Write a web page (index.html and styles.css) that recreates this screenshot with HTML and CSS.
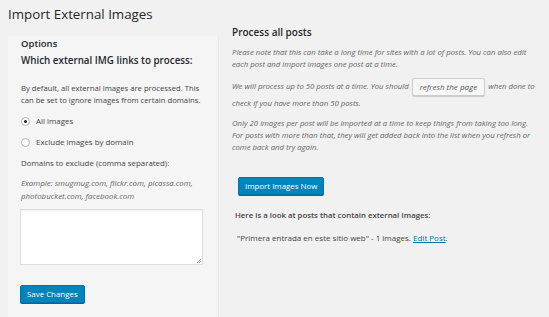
FILE: index.html
```html
<!DOCTYPE html>
<html>
<head>
<meta charset="utf-8">
<link rel="stylesheet" href="styles.css">
</head>
<body>
<div class="wrap">
  <h1 class="title">Import External Images</h1>
  <div class="cols">
    <div class="panel">
      <h2 class="panel-title">Options</h2>
      <h3 class="sub">Which external IMG links to process:</h3>
      <p class="text intro">By default, all external images are processed. This can be set to ignore images from certain domains.</p>
      <label class="radio"><span class="dot checked"></span>All images</label>
      <label class="radio"><span class="dot"></span>Exclude images by domain</label>
      <p class="text label">Domains to exclude (comma separated):</p>
      <p class="text em">Example: smugmug.com, flickr.com, picassa.com, photobucket.com, facebook.com</p>
      <div class="textarea"><span class="grip"></span></div>
      <div class="btn-row"><span class="btn primary">Save Changes</span></div>
    </div>
    <div class="main">
      <h2 class="main-title">Process all posts</h2>
      <p class="note">Please note that this can take a long time for sites with a lot of posts. You can also edit each post and import images one post at a time.</p>
      <p class="note tall">We will process up to 50 posts at a time. You should <span class="btn secondary">refresh the page</span> when done to check if you have more than 50 posts.</p>
      <p class="note">Only 20 images per post will be imported at a time to keep things from taking too long. For posts with more than that, they will get added back into the list when you refresh or come back and try again.</p>
      <div class="import-row"><span class="btn primary">Import Images Now</span></div>
      <p class="look">Here is a look at posts that contain external Images:</p>
      <p class="post">"Primera entrada en este sitio web" - 1 images. <a href="#" class="link">Edit Post</a>.</p>
    </div>
  </div>
</div>
</body>
</html>
```

FILE: styles.css
```css
html, body {
  margin: 0;
  padding: 0;
  background: #f1f1f1;
  height: 100%;
  overflow: hidden;
}
body {
  font-family: "Open Sans", "Noto Sans", sans-serif;
  color: #444;
  font-size: 7.9px;
}
.wrap {
  padding-left: 8px;
}
.title {
  margin: 0;
  padding-top: 4px;
  font-size: 13.3px;
  font-weight: 400;
  color: #23282d;
  line-height: 20px;
}
.cols {
  display: flex;
  align-items: flex-start;
}
.panel {
  width: 211px;
  box-sizing: border-box;
  margin-top: 12px;
  padding: 0 14px 0 13px;
  background: #f5f5f5;
  border-right: 1px solid #e9e9e9;
  height: 281px;
}
.panel-title {
  margin: 0;
  padding-top: 1px;
  font-size: 9.5px;
  font-weight: 600;
  color: #23282d;
  line-height: 14px;
}
.sub {
  margin: 3px 0 0;
  font-size: 9.8px;
  font-weight: 600;
  color: #23282d;
  line-height: 14px;
}
.text {
  margin: 14px 0 0;
  line-height: 12px;
}
.intro {
  font-size: 7.7px;
}
.radio {
  display: flex;
  align-items: center;
  margin-top: 9px;
  height: 12px;
}
.radio + .radio {
  margin-top: 9px;
}
.dot {
  width: 7px;
  height: 7px;
  border: 1px solid #b4b9be;
  border-radius: 50%;
  background: #fff;
  margin: 0 6px 0 0;
  box-sizing: content-box;
  position: relative;
}
.dot.checked::after {
  content: "";
  position: absolute;
  left: 2px;
  top: 2px;
  width: 3px;
  height: 3px;
  border-radius: 50%;
  background: #1e1e1e;
}
.label {
  margin-top: 9px;
}
.em {
  font-style: italic;
  color: #666;
  margin-top: 8px;
  line-height: 12.5px;
}
.textarea {
  width: 183px;
  height: 56px;
  box-sizing: border-box;
  margin: 7px 0 0 -1px;
  background: #fff;
  border: 1px solid #ddd;
  box-shadow: inset 0 1px 2px rgba(0,0,0,.07);
  position: relative;
}
.grip {
  position: absolute;
  right: 1px;
  bottom: 1px;
  width: 4px;
  height: 4px;
  background: linear-gradient(135deg, transparent 50%, #aaa 50%, #aaa 60%, transparent 60%, transparent 75%, #aaa 75%, #aaa 85%, transparent 85%);
}
.btn-row {
  margin: 20px 0 0 -1px;
}
.btn {
  display: inline-block;
  box-sizing: border-box;
  border-radius: 2px;
  line-height: 16px;
  vertical-align: middle;
}
.btn.primary {
  background: #0085ba;
  border: 1px solid #0073aa;
  color: #fff;
  padding: 0 6px;
  box-shadow: 0 1px 0 #006799;
  height: 18px;
  font-size: 7.9px;
}
.btn.secondary {
  background: #f7f7f7;
  border: 1px solid #ccc;
  box-shadow: 0 1px 0 #ccc;
  color: #555;
  padding: 0 7px;
  height: 18px;
  margin: 0 1px;
  font-size: 8px;
  line-height: 16px;
}
.main {
  margin-left: 13px;
  width: 308px;
}
.main-title {
  margin: 1px 0 0;
  font-size: 10px;
  font-weight: 600;
  color: #23282d;
  line-height: 14px;
}
.note {
  margin: 7px 0 0;
  font-style: italic;
  color: #666;
  font-size: 7.75px;
  line-height: 12px;
}
.note.tall {
  line-height: 14px;
  margin-top: 8px;
}
.import-row {
  margin: 24px 0 0 6px;
}
.look {
  margin: 15px 0 0 3px;
  font-weight: 600;
  font-size: 7.8px;
  color: #444;
}
.post {
  margin: 12px 0 0 5px;
  font-size: 8px;
}
.link {
  color: #0073aa;
  text-decoration: underline;
}
```
